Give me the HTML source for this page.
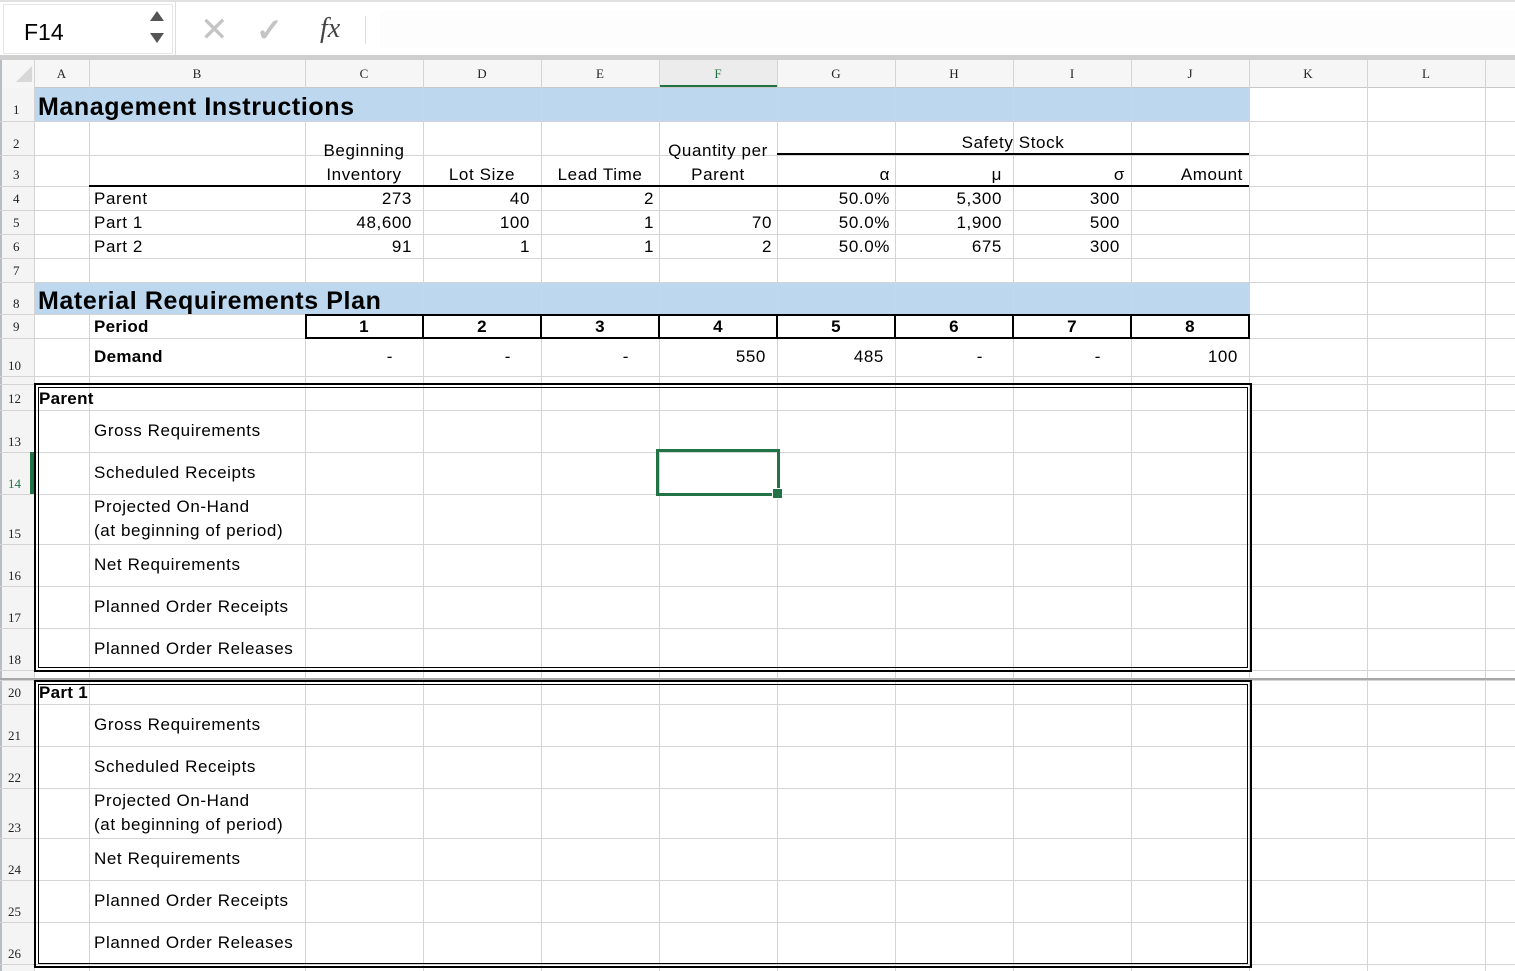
<!DOCTYPE html>
<html><head><meta charset="utf-8"><style>
*{margin:0;padding:0;box-sizing:border-box}
body{width:1515px;height:971px;overflow:hidden;background:#fff;position:relative;font-family:"Liberation Sans",Arial,sans-serif;color:#000}
div{position:absolute}
.v{top:60px;width:1px;height:911px;background:#d4d4d4}
.h{left:0;width:1515px;height:1px;background:#d4d4d4}
.t{font-size:17px;line-height:20px;white-space:nowrap;height:20px;letter-spacing:0.6px}
.b{font-weight:bold;letter-spacing:0.3px}
.rh{left:8px;font-family:"Liberation Serif",serif;font-size:13px;line-height:14px;color:#222}
.ch{top:66px;font-family:"Liberation Serif",serif;font-size:13px;line-height:16px;text-align:center;color:#222}
.k{background:#000}
</style></head><body>
<div style="left:0;top:0;width:1515px;height:56px;background:#fff;border-top:2px solid #e0e0e0"></div>
<div style="left:3px;top:4px;width:170px;height:50px;border:1px solid #e6e6e6;background:#fff"></div>
<div style="left:24px;top:18px;font-size:23px;line-height:28px">F14</div>
<div style="left:150px;top:11px;width:0;height:0;border-left:7px solid transparent;border-right:7px solid transparent;border-bottom:10px solid #555"></div>
<div style="left:150px;top:33px;width:0;height:0;border-left:7px solid transparent;border-right:7px solid transparent;border-top:10px solid #555"></div>
<div style="left:175px;top:2px;width:1px;height:54px;background:#ddd"></div>
<div style="left:200px;top:12px;font-size:34px;line-height:36px;color:#c4c4c4">✕</div>
<div style="left:256px;top:12px;font-size:32px;line-height:36px;color:#c4c4c4;font-weight:bold">✓</div>
<div style="left:320px;top:12px;font-family:'Liberation Serif',serif;font-style:italic;font-size:28px;line-height:34px;color:#444">fx</div>
<div style="left:365px;top:16px;width:1px;height:28px;background:#ddd"></div>
<div style="left:380px;top:10px;width:1135px;height:38px;background:#fdfdfd"></div>
<div style="left:0;top:55px;width:1515px;height:5px;background:#cfcfcf"></div>
<div style="left:0;top:60px;width:1515px;height:28px;background:#f6f6f6"></div>
<div style="left:0;top:88px;width:34px;height:883px;background:#f4f4f4"></div>
<div style="left:0;top:60px;width:2px;height:911px;background:#b8bcc4"></div>
<div style="left:16px;top:66px;width:0;height:0;border-left:16px solid transparent;border-bottom:16px solid #d8d8d8"></div>
<div style="left:659px;top:60px;width:118px;height:28px;background:#ececec"></div>
<div style="left:659px;top:85px;width:118px;height:3px;background:#217346"></div>
<div style="left:34px;top:87px;width:1481px;height:1px;background:#c8c8c8"></div>
<div style="left:34px;top:88px;width:1215px;height:33px;background:#bdd7ee"></div>
<div style="left:34px;top:282px;width:1215px;height:32px;background:#bdd7ee"></div>
<div class="v" style="left:34px"></div><div class="v" style="left:89px"></div><div class="v" style="left:305px"></div><div class="v" style="left:423px"></div><div class="v" style="left:541px"></div><div class="v" style="left:659px"></div><div class="v" style="left:777px"></div><div class="v" style="left:895px"></div><div class="v" style="left:1013px"></div><div class="v" style="left:1131px"></div><div class="v" style="left:1249px"></div><div class="v" style="left:1367px"></div><div class="v" style="left:1485px"></div>
<div class="h" style="top:121px"></div><div class="h" style="top:155px"></div><div class="h" style="top:186px"></div><div class="h" style="top:210px"></div><div class="h" style="top:234px"></div><div class="h" style="top:258px"></div><div class="h" style="top:282px"></div><div class="h" style="top:314px"></div><div class="h" style="top:338px"></div><div class="h" style="top:376px"></div><div class="h" style="top:384px"></div><div class="h" style="top:410px"></div><div class="h" style="top:452px"></div><div class="h" style="top:494px"></div><div class="h" style="top:544px"></div><div class="h" style="top:586px"></div><div class="h" style="top:628px"></div><div class="h" style="top:670px"></div><div class="h" style="top:680px"></div><div class="h" style="top:704px"></div><div class="h" style="top:746px"></div><div class="h" style="top:788px"></div><div class="h" style="top:838px"></div><div class="h" style="top:880px"></div><div class="h" style="top:922px"></div><div class="h" style="top:964px"></div>
<div style="left:0;top:678px;width:1515px;height:2px;background:#a8a8a8"></div>
<div class="ch" style="left:34px;width:55px">A</div><div class="ch" style="left:89px;width:216px">B</div><div class="ch" style="left:305px;width:118px">C</div><div class="ch" style="left:423px;width:118px">D</div><div class="ch" style="left:541px;width:118px">E</div><div class="ch" style="left:659px;width:118px;color:#217346">F</div><div class="ch" style="left:777px;width:118px">G</div><div class="ch" style="left:895px;width:118px">H</div><div class="ch" style="left:1013px;width:118px">I</div><div class="ch" style="left:1131px;width:118px">J</div><div class="ch" style="left:1249px;width:118px">K</div><div class="ch" style="left:1367px;width:118px">L</div>
<div class="rh" style="left:13px;top:103px">1</div><div class="rh" style="left:13px;top:137px">2</div><div class="rh" style="left:13px;top:168px">3</div><div class="rh" style="left:13px;top:192px">4</div><div class="rh" style="left:13px;top:216px">5</div><div class="rh" style="left:13px;top:240px">6</div><div class="rh" style="left:13px;top:264px">7</div><div class="rh" style="left:13px;top:297px">8</div><div class="rh" style="left:13px;top:320px">9</div><div class="rh" style="top:359px">10</div><div class="rh" style="top:392px">12</div><div class="rh" style="top:435px">13</div><div class="rh" style="top:477px;color:#217346">14</div><div class="rh" style="top:527px">15</div><div class="rh" style="top:569px">16</div><div class="rh" style="top:611px">17</div><div class="rh" style="top:653px">18</div><div class="rh" style="top:686px">20</div><div class="rh" style="top:729px">21</div><div class="rh" style="top:771px">22</div><div class="rh" style="top:821px">23</div><div class="rh" style="top:863px">24</div><div class="rh" style="top:905px">25</div><div class="rh" style="top:947px">26</div>
<div style="left:30px;top:452px;width:4px;height:42px;background:#217346"></div>
<div class="b" style="left:38px;top:92px;font-size:25px;line-height:30px;white-space:nowrap;letter-spacing:0.6px">Management Instructions</div>
<div class="b" style="left:38px;top:286px;font-size:25px;line-height:30px;white-space:nowrap;letter-spacing:0.6px">Material Requirements Plan</div>
<div class="t" style="left:305px;width:118px;top:141px;text-align:center">Beginning</div>
<div class="t" style="left:659px;width:118px;top:141px;text-align:center">Quantity per</div>
<div class="t" style="left:895px;width:236px;top:133px;text-align:center">Safety Stock</div>
<div class="t" style="left:305px;width:118px;top:165px;text-align:center">Inventory</div>
<div class="t" style="left:423px;width:118px;top:165px;text-align:center">Lot Size</div>
<div class="t" style="left:541px;width:118px;top:165px;text-align:center">Lead Time</div>
<div class="t" style="left:659px;width:118px;top:165px;text-align:center">Parent</div>
<div class="t" style="right:625px;top:165px">α</div><div class="t" style="right:513px;top:165px">μ</div><div class="t" style="right:390px;top:165px">σ</div><div class="t" style="right:272px;top:165px">Amount</div>
<div class="k" style="left:89px;top:185px;width:1160px;height:2px"></div>
<div class="k" style="left:777px;top:153px;width:472px;height:2px"></div>
<div class="t" style="left:94px;top:189px">Parent</div><div class="t" style="right:1103px;top:189px">273</div><div class="t" style="right:985px;top:189px">40</div><div class="t" style="right:861px;top:189px">2</div><div class="t" style="right:625px;top:189px">50.0%</div><div class="t" style="right:513px;top:189px">5,300</div><div class="t" style="right:395px;top:189px">300</div>
<div class="t" style="left:94px;top:213px">Part 1</div><div class="t" style="right:1103px;top:213px">48,600</div><div class="t" style="right:985px;top:213px">100</div><div class="t" style="right:861px;top:213px">1</div><div class="t" style="right:743px;top:213px">70</div><div class="t" style="right:625px;top:213px">50.0%</div><div class="t" style="right:513px;top:213px">1,900</div><div class="t" style="right:395px;top:213px">500</div>
<div class="t" style="left:94px;top:237px">Part 2</div><div class="t" style="right:1103px;top:237px">91</div><div class="t" style="right:985px;top:237px">1</div><div class="t" style="right:861px;top:237px">1</div><div class="t" style="right:743px;top:237px">2</div><div class="t" style="right:625px;top:237px">50.0%</div><div class="t" style="right:513px;top:237px">675</div><div class="t" style="right:395px;top:237px">300</div>
<div style="left:305px;top:314px;width:945px;height:25px;border:2px solid #000"></div>
<div class="k" style="left:422px;top:314px;width:2px;height:25px"></div><div class="k" style="left:540px;top:314px;width:2px;height:25px"></div><div class="k" style="left:658px;top:314px;width:2px;height:25px"></div><div class="k" style="left:776px;top:314px;width:2px;height:25px"></div><div class="k" style="left:894px;top:314px;width:2px;height:25px"></div><div class="k" style="left:1012px;top:314px;width:2px;height:25px"></div><div class="k" style="left:1130px;top:314px;width:2px;height:25px"></div>
<div class="t b" style="left:94px;top:317px">Period</div>
<div class="t b" style="left:305px;width:118px;top:317px;text-align:center">1</div><div class="t b" style="left:423px;width:118px;top:317px;text-align:center">2</div><div class="t b" style="left:541px;width:118px;top:317px;text-align:center">3</div><div class="t b" style="left:659px;width:118px;top:317px;text-align:center">4</div><div class="t b" style="left:777px;width:118px;top:317px;text-align:center">5</div><div class="t b" style="left:895px;width:118px;top:317px;text-align:center">6</div><div class="t b" style="left:1013px;width:118px;top:317px;text-align:center">7</div><div class="t b" style="left:1131px;width:118px;top:317px;text-align:center">8</div>
<div class="t b" style="left:94px;top:347px">Demand</div>
<div class="t" style="right:1122px;top:347px">-</div><div class="t" style="right:1004px;top:347px">-</div><div class="t" style="right:886px;top:347px">-</div><div class="t" style="right:749px;top:347px">550</div><div class="t" style="right:631px;top:347px">485</div><div class="t" style="right:532px;top:347px">-</div><div class="t" style="right:414px;top:347px">-</div><div class="t" style="right:277px;top:347px">100</div>
<div style="left:34px;top:383px;width:1218px;height:289px;border:2px solid #000"></div>
<div style="left:38px;top:387px;width:1210px;height:281px;border:1px solid #000"></div>
<div style="left:34px;top:680px;width:1218px;height:288px;border:2px solid #000"></div>
<div style="left:38px;top:684px;width:1210px;height:280px;border:1px solid #000"></div>
<div class="t b" style="left:39px;top:389px">Parent</div>
<div class="t" style="left:94px;top:421px">Gross Requirements</div>
<div class="t" style="left:94px;top:463px">Scheduled Receipts</div>
<div class="t" style="left:94px;top:497px">Projected On-Hand</div>
<div class="t" style="left:94px;top:521px">(at beginning of period)</div>
<div class="t" style="left:94px;top:555px">Net Requirements</div>
<div class="t" style="left:94px;top:597px">Planned Order Receipts</div>
<div class="t" style="left:94px;top:639px">Planned Order Releases</div>
<div class="t b" style="left:39px;top:683px">Part 1</div>
<div class="t" style="left:94px;top:715px">Gross Requirements</div>
<div class="t" style="left:94px;top:757px">Scheduled Receipts</div>
<div class="t" style="left:94px;top:791px">Projected On-Hand</div>
<div class="t" style="left:94px;top:815px">(at beginning of period)</div>
<div class="t" style="left:94px;top:849px">Net Requirements</div>
<div class="t" style="left:94px;top:891px">Planned Order Receipts</div>
<div class="t" style="left:94px;top:933px">Planned Order Releases</div>
<div style="left:656px;top:449px;width:124px;height:47px;border:3px solid #217346"></div>
<div style="left:772px;top:488px;width:11px;height:11px;background:#fff"></div>
<div style="left:773px;top:489px;width:9px;height:9px;background:#217346"></div>
</body></html>
